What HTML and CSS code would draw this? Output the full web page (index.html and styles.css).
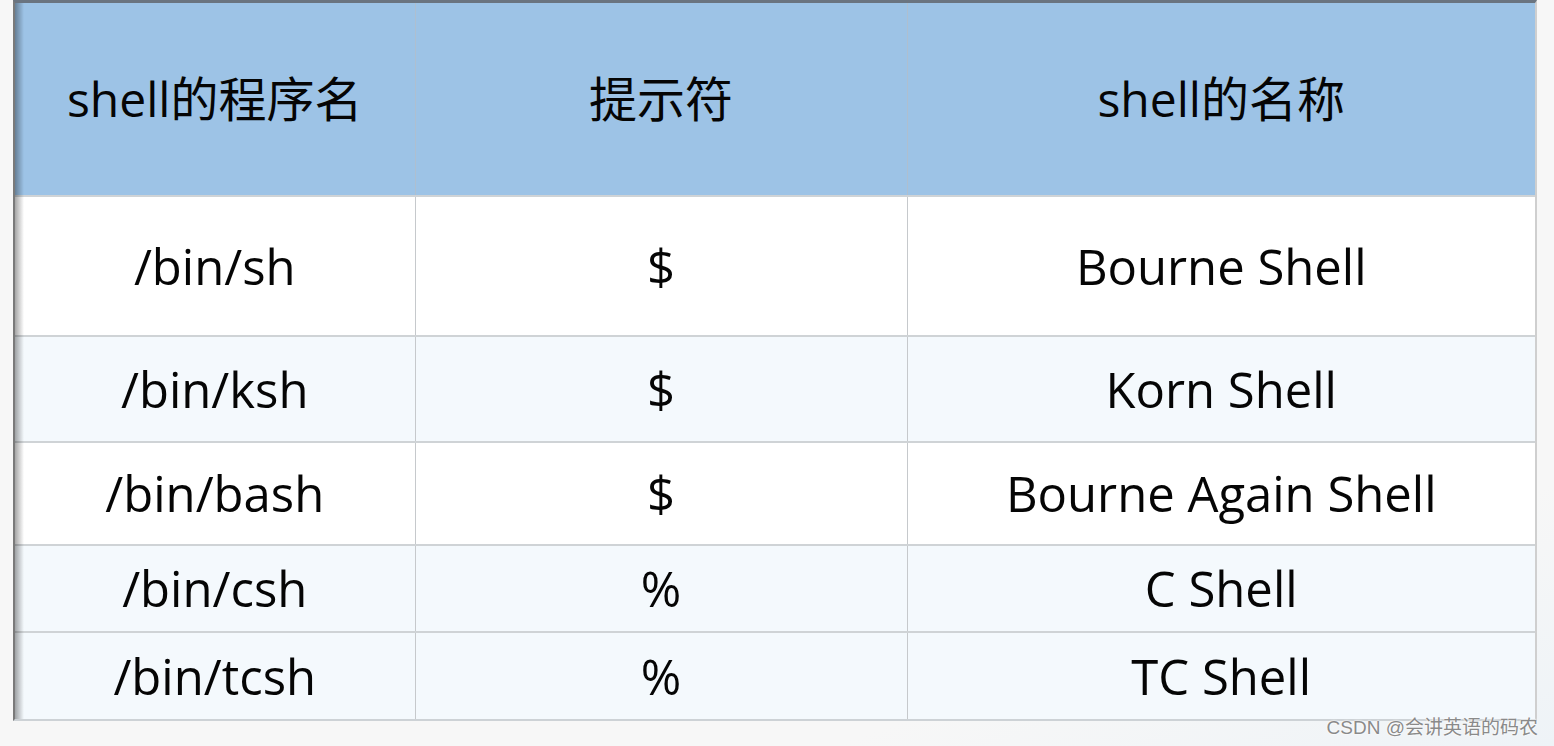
FILE: index.html
```html
<!DOCTYPE html>
<html lang="zh-CN">
<head>
<meta charset="utf-8">
<title>shell</title>
<link rel="stylesheet" href="styles.css">
</head>
<body>
<div class="page">
  <div class="sheet">
    <table class="grid">
      <colgroup>
        <col class="c1"><col class="c2"><col class="c3">
      </colgroup>
      <thead>
        <tr class="head">
          <th>shell的程序名</th>
          <th>提示符</th>
          <th>shell的名称</th>
        </tr>
      </thead>
      <tbody>
        <tr class="r1"><td>/bin/sh</td><td>$</td><td>Bourne Shell</td></tr>
        <tr class="r2 alt"><td>/bin/ksh</td><td>$</td><td>Korn Shell</td></tr>
        <tr class="r3"><td>/bin/bash</td><td>$</td><td>Bourne Again Shell</td></tr>
        <tr class="r4 alt"><td>/bin/csh</td><td>%</td><td>C Shell</td></tr>
        <tr class="r5 alt"><td>/bin/tcsh</td><td>%</td><td>TC Shell</td></tr>
      </tbody>
    </table>
  </div>
  <div class="mark">CSDN @会讲英语的码农</div>
</div>
</body>
</html>
```
FILE: styles.css
```css
html, body {
  margin: 0;
  padding: 0;
}
body {
  background: #f6f6f6;
  width: 1554px;
  height: 746px;
  overflow: hidden;
  font-family: "Open Sans", "Noto Sans CJK SC", sans-serif;
  color: #050505;
}
.page {
  position: relative;
  height: 746px;
  padding-left: 13px;
  background: linear-gradient(160deg, #f7f7f7 0%, #f7f7f7 80%, #eef3f7 100%);
}
.sheet {
  position: relative;
  width: 1524px;
  border-top: 3px solid #6a7480;
  border-left: 2px solid #7a7a7a;
  border-right: 2px solid #cfcfcf;
  border-bottom: 2px solid #cdd2d6;
  box-sizing: border-box;
}
.sheet::after {
  content: "";
  position: absolute;
  left: 0;
  top: 0;
  bottom: 0;
  width: 9px;
  background: linear-gradient(90deg, rgba(0,0,0,0.35), rgba(0,0,0,0));
  pointer-events: none;
}
.grid {
  width: 100%;
  border-collapse: collapse;
  table-layout: fixed;
}
.c1 { width: 400px; }
.c2 { width: 492px; }
.c3 { width: 628px; }
.grid th, .grid td {
  text-align: center;
  vertical-align: middle;
  padding: 0;
  border-left: 1px solid #c6c9cc;
  border-top: 2px solid #cfd3d6;
  font-size: 49px;
  font-weight: 400;
  line-height: 1;
}
.grid th:first-child, .grid td:first-child { border-left: none; }
.head th {
  background: #9dc3e6;
  border-top: none;
  border-left-color: #aebfd0;
  height: 193px;
  padding-bottom: 0;
  font-size: 48px;
  box-sizing: border-box;
}
.head { box-shadow: 0 1px 0 #8fa8bf; }
.r1 td { height: 138px; background: #ffffff; }
.r2 td { height: 104px; }
.r3 td { height: 101px; background: #ffffff; }
.r4 td { height: 85px; }
.r5 td { height: 86px; }
.alt td { background: #f4f9fd; }
.mark {
  position: absolute;
  right: 16px;
  bottom: 7px;
  font-family: "Liberation Sans", "Noto Sans CJK SC", sans-serif;
  font-size: 19px;
  color: #8a8a8a;
  text-shadow: 0 0 2px #fff, 0 0 2px #fff;
}
```
